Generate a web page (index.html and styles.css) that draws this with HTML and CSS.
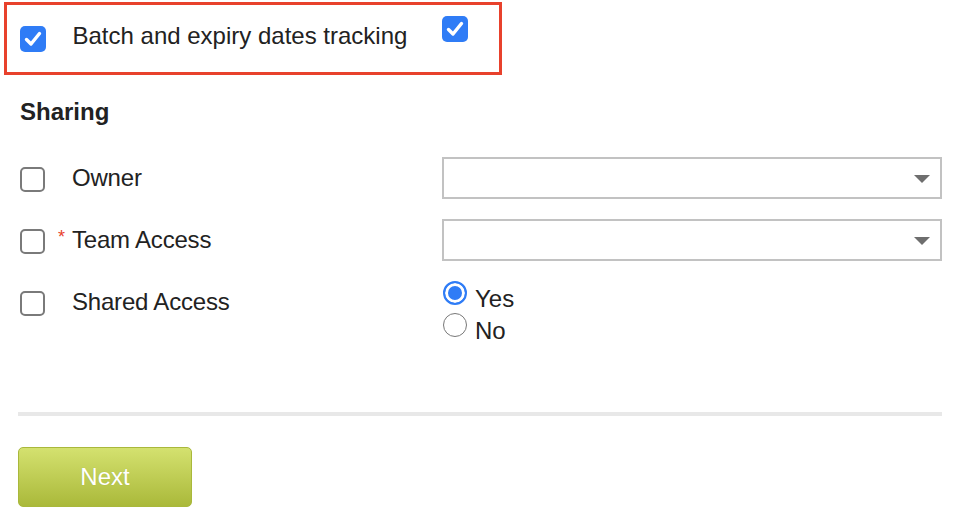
FILE: index.html
```html
<!DOCTYPE html>
<html lang="en">
<head>
<meta charset="utf-8">
<title>Settings</title>
<link rel="stylesheet" href="styles.css">
</head>
<body>
<div class="page">
  <div class="highlight">
    <span class="cb cb-checked cb-main"><svg viewBox="0 0 26 26" width="26" height="26"><rect width="26" height="26" rx="5" fill="#2f7cf6"/><path d="M6.5 13.5 L11 18 L19.5 7.5" fill="none" stroke="#fff" stroke-width="3.4" stroke-linecap="round" stroke-linejoin="round"/></svg></span>
    <span class="hl-label">Batch and expiry dates tracking</span>
    <span class="cb cb-checked cb-side"><svg viewBox="0 0 26 26" width="26" height="26"><rect width="26" height="26" rx="5" fill="#2f7cf6"/><path d="M6.5 13.5 L11 18 L19.5 7.5" fill="none" stroke="#fff" stroke-width="3.4" stroke-linecap="round" stroke-linejoin="round"/></svg></span>
  </div>

  <div class="sharing">
    <h2 class="heading">Sharing</h2>

    <div class="row">
      <span class="cb cb-empty"></span>
      <span class="label">Owner</span>
      <div class="select"><span class="arrow"></span></div>
    </div>

    <div class="row">
      <span class="cb cb-empty"></span>
      <span class="label"><span class="req">*</span>Team Access</span>
      <div class="select"><span class="arrow"></span></div>
    </div>

    <div class="row">
      <span class="cb cb-empty"></span>
      <span class="label">Shared Access</span>
      <div class="radios">
        <div class="radio-line"><span class="radio radio-on"></span><span class="radio-text">Yes</span></div>
        <div class="radio-line"><span class="radio radio-off"></span><span class="radio-text">No</span></div>
      </div>
    </div>

    <div class="divider"></div>

    <button class="next" type="button">Next</button>
  </div>
</div>
</body>
</html>
```

FILE: styles.css
```css
html, body {
  margin: 0;
  padding: 0;
  background: #fff;
}

body {
  font-family: "Liberation Sans", Arial, Helvetica, sans-serif;
  font-size: 24px;
  color: #222;
}

.page {
  padding: 2px 0 0 4px;
}

.highlight {
  box-sizing: border-box;
  width: 498px;
  height: 73px;
  border: 3.5px solid #e8412c;
  display: flex;
  align-items: flex-start;
}

.cb {
  display: block;
  flex: none;
  width: 26px;
  height: 26px;
}

.cb svg {
  display: block;
}

.cb-main {
  margin: 20.5px 0 0 12.5px;
}

.hl-label {
  width: 369px;
  margin: 16.5px 0 0 27px;
  line-height: 28px;
  white-space: nowrap;
}

.cb-side {
  margin-top: 10.5px;
}

.sharing {
  width: 924px;
  padding-left: 14px;
}

.heading {
  margin: 23px 0 31px 2px;
  font-size: 24px;
  line-height: 28px;
  font-weight: bold;
  color: #222;
}

.row {
  display: flex;
  align-items: flex-start;
  margin-bottom: 20px;
}

.cb-empty {
  box-sizing: border-box;
  width: 25px;
  height: 25px;
  margin: 10px 0 0 2px;
  border: 2px solid #7a7a7a;
  border-radius: 5px;
  background: #fff;
}

.label {
  box-sizing: border-box;
  width: 397px;
  padding-left: 27px;
  margin-top: 7px;
  line-height: 28px;
  white-space: nowrap;
  letter-spacing: -0.2px;
}

.req {
  display: inline-block;
  width: 14px;
  margin-left: -14px;
  color: #e8412c;
  font-size: 18px;
  vertical-align: top;
  line-height: 22px;
}

.select {
  box-sizing: border-box;
  width: 500px;
  height: 42px;
  border: 2px solid #c2c2c2;
  background: #fff;
  display: flex;
  align-items: center;
  justify-content: flex-end;
  padding-right: 10px;
}

.arrow {
  width: 0;
  height: 0;
  border-left: 8px solid transparent;
  border-right: 8px solid transparent;
  border-top: 8px solid #6e6e6e;
  margin-top: 1px;
}

.radios {
  display: flex;
  flex-direction: column;
  padding-left: 1px;
}

.radio-line {
  display: flex;
  align-items: flex-start;
  height: 32px;
}

.radio {
  box-sizing: border-box;
  width: 24px;
  height: 24px;
  border-radius: 50%;
  flex: none;
}

.radio-on {
  background: #2f7cf6;
  border: 2px solid #2f7cf6;
  box-shadow: inset 0 0 0 3px #fff;
}

.radio-off {
  background: #fff;
  border: 1.5px solid #787878;
}

.radio-text {
  margin-left: 8px;
  line-height: 32px;
  padding-top: 2px;
}

.divider {
  height: 4px;
  background: #e8e8e8;
  margin-top: 67px;
}

.next {
  display: block;
  box-sizing: border-box;
  width: 174px;
  height: 60px;
  margin-top: 31px;
  padding: 0;
  border: 1px solid #a9b83b;
  border-radius: 5px;
  background: linear-gradient(#d4e16f, #aab93a);
  color: #fff;
  font-family: "Liberation Sans", Arial, Helvetica, sans-serif;
  font-size: 24px;
  text-shadow: 0 0 1px rgba(120, 130, 30, 0.3);
}
```
